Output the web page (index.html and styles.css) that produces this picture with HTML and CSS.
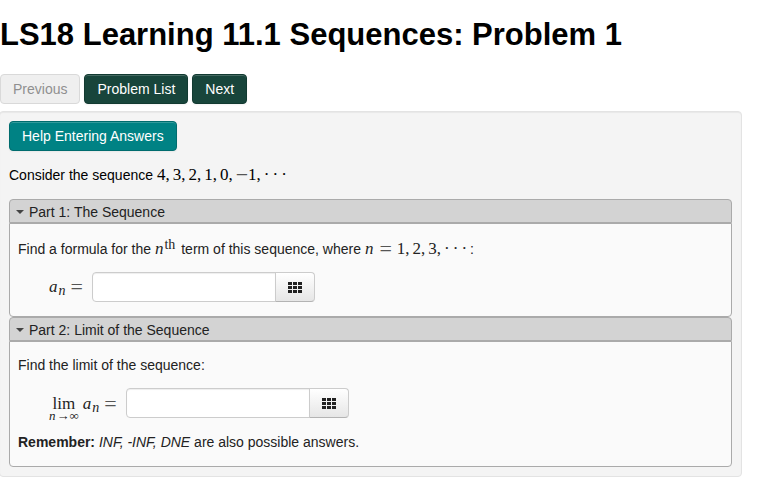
FILE: index.html
```html
<!DOCTYPE html>
<html lang="en">
<head>
  <meta charset="UTF-8" />
  <title>LS18 Learning 11.1 Sequences: Problem 1</title>
  <meta name="viewport" content="width=device-width, initial-scale=1.0" />
  <link rel="stylesheet" href="styles.css">
</head>
<body>

<h1 class="page-title">LS18 Learning 11.1 Sequences: Problem 1</h1>

<nav class="problem-nav">
  <button type="button" class="btn btn-disabled" disabled>Previous</button>
  <a href="#" class="btn btn-primary">Problem List</a>
  <a href="#" class="btn btn-primary">Next</a>
</nav>

<main class="problem">
  <button type="button" class="btn btn-help">Help Entering Answers</button>

  <p class="intro">Consider the sequence
    <span class="math">4<span class="sep">,</span>3<span class="sep">,</span>2<span class="sep">,</span>1<span class="sep">,</span>0<span class="sep">,</span><span class="op">−</span>1<span class="sep">,</span><span class="dot">·</span><span class="dot">·</span><span class="dot">·</span></span>
  </p>

  <details class="section" open>
    <summary>Part 1: The Sequence</summary>
    <div class="section-body">
      <p class="tall">Find a formula for the <span class="math"><i>n</i><sup>th</sup></span> term of this sequence, where
        <span class="math"><i>n</i><span class="op eq">=</span>1<span class="sep">,</span>2<span class="sep">,</span>3<span class="sep">,</span><span class="dot">·</span><span class="dot">·</span><span class="dot">·</span></span>:</p>
      <div class="answer-row">
        <label for="answer1" class="math"><i>a</i><sub>n</sub><span class="op eq">=</span></label>
        <div class="answer-group">
          <input type="text" id="answer1" class="answer">
          <button type="button" class="keypad" aria-label="Equation editor">
            <svg width="14" height="11" viewBox="0 0 14 11"><path d="M0 0h4v3H0zM5 0h4v3H5zM10 0h4v3h-4zM0 4h4v3H0zM5 4h4v3H5zM10 4h4v3h-4zM0 8h4v3H0zM5 8h4v3H5zM10 8h4v3h-4z"/></svg>
          </button>
        </div>
      </div>
    </div>
  </details>

  <details class="section" open>
    <summary>Part 2: Limit of the Sequence</summary>
    <div class="section-body">
      <p>Find the limit of the sequence:</p>
      <div class="answer-row">
        <label for="answer2" class="math limit">
          <span class="lim"><span>lim</span><span class="under"><i>n</i>→∞</span></span>
          <span><i>a</i><sub>n</sub><span class="op eq">=</span></span>
        </label>
        <div class="answer-group">
          <input type="text" id="answer2" class="answer">
          <button type="button" class="keypad" aria-label="Equation editor">
            <svg width="14" height="11" viewBox="0 0 14 11"><path d="M0 0h4v3H0zM5 0h4v3H5zM10 0h4v3h-4zM0 4h4v3H0zM5 4h4v3H5zM10 4h4v3h-4zM0 8h4v3H0zM5 8h4v3H5zM10 8h4v3h-4z"/></svg>
          </button>
        </div>
      </div>
      <p class="note"><b>Remember:</b> <i>INF, -INF, DNE</i> are also possible answers.</p>
    </div>
  </details>
</main>

</body>
</html>
```

FILE: styles.css
```css
* {
  margin: 0; padding: 0; box-sizing: border-box;
}
body {
  background: #fff;
  color: #000;
  font-family: "Liberation Sans", Arial, sans-serif;
  font-size: 14px;
  line-height: 20px;
  padding-right: 15px;
}
.page-title {
  font-size: 31px;
  line-height: 40px;
  padding-top: 15px;
  margin-bottom: 19px;
}

.problem-nav {
  display: flex;
  gap: 4px;
  margin-bottom: 7px;
}
.btn {
  display: inline-block;
  padding: 4px 12px;
  border: 1px solid;
  border-radius: 4px;
  font-family: inherit;
  font-size: 14px;
  line-height: 20px;
  text-decoration: none;
  cursor: pointer;
}
.btn-disabled {
  background: #efefef;
  border-color: #d9d9d9;
  color: #8f8f8f;
  cursor: default;
}
.btn-primary {
  background: #18453b;
  border-color: #123a31;
  color: #fff;
  box-shadow: inset 0 1px 0 rgba(255,255,255,0.2), 0 1px 2px rgba(0,0,0,0.05);
}
.btn-help {
  background: #008284;
  border-color: #006c6e;
  color: #fff;
  box-shadow: inset 0 1px 0 rgba(255,255,255,0.2), 0 1px 2px rgba(0,0,0,0.05);
}

.problem {
  margin-left: -1px;
  padding: 9px;
  background: #f4f4f4;
  border: 1px solid #e3e3e3;
  border-radius: 4px;
  box-shadow: inset 0 1px 1px rgba(0,0,0,0.05);
}
.intro {
  margin: 14px 0;
}

.section summary {
  display: flex;
  align-items: center;
  gap: 5px;
  height: 24px;
  padding: 2px 6px 0;
  background: #d3d3d3;
  border: 1px solid #aaa;
  border-radius: 4px 4px 0 0;
  color: #222;
  cursor: pointer;
}
.section summary::before {
  content: "";
  border: 4px solid transparent;
  border-top-color: #444;
  border-bottom: none;
}
.section-body {
  padding: 13px 8px 14px;
  background: #fafafa;
  border: 1px solid #aaa;
  border-radius: 0 0 4px 4px;
  color: #222;
}
.section-body .tall {
  padding-top: 2px;
}
.note {
  margin-top: 14px;
}

/* math */
.math {
  font-family: "Liberation Serif", "Times New Roman", serif;
  font-size: 17px;
  line-height: 20px;
  white-space: nowrap;
}
.math i {
  margin-right: 1px;
}
.math sup,
.math sub {
  font-size: 14px;
  line-height: 0;
}
.math sup {
  vertical-align: 5px;
  margin-right: 2px;
}
.math sub {
  font-style: italic;
  vertical-align: -3px;
}
.sep,
.dot {
  margin-right: 3px;
}
.op {
  color: #555;
  font-size: 22px;
  line-height: 0;
  vertical-align: -2px;
}
.eq {
  margin: 0 5px;
}
.limit {
  display: flex;
  align-items: baseline;
  gap: 4px;
  padding-top: 4px;
  margin-bottom: -4px;
}
.lim {
  display: flex;
  flex-direction: column;
  align-items: center;
  line-height: 14px;
}
.under {
  font-size: 13px;
  line-height: 10px;
}

.answer-row {
  display: flex;
  align-items: center;
  gap: 4px;
  margin-top: 13px;
  padding-left: 31px;
}
.answer-group {
  display: flex;
}
.answer {
  width: 184px;
  height: 30px;
  padding: 4px 6px;
  border: 1px solid #ccc;
  border-radius: 4px 0 0 4px;
  background: #fff;
  font-size: 14px;
  box-shadow: inset 0 1px 1px rgba(0,0,0,0.07);
}
.keypad {
  display: flex;
  align-items: center;
  justify-content: center;
  width: 40px;
  height: 30px;
  margin-left: -1px;
  border: 1px solid #ccc;
  border-bottom-color: #b3b3b3;
  border-radius: 0 4px 4px 0;
  background: linear-gradient(#fff, #e6e6e6);
  fill: #222;
  cursor: pointer;
}
```
